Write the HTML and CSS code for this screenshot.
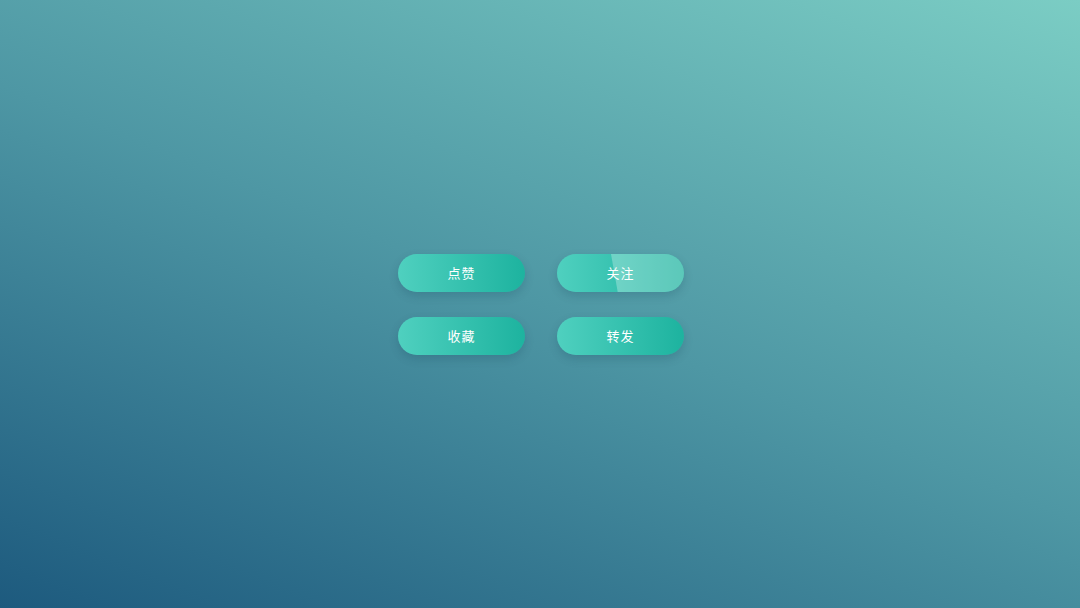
FILE: index.html
```html
<!DOCTYPE html>
<html lang="zh">
<head>
<meta charset="utf-8">
<link rel="stylesheet" href="styles.css">
</head>
<body>
<div class="stage">
  <div class="grid">
    <button class="btn">点赞</button>
    <button class="btn active"><span class="label">关注</span></button>
    <button class="btn">收藏</button>
    <button class="btn">转发</button>
  </div>
</div>
</body>
</html>
```
FILE: styles.css
```css
html, body {
  margin: 0;
  padding: 0;
  width: 1080px;
  height: 608px;
  overflow: hidden;
}
body {
  background: linear-gradient(22deg, #1d5a7e 0%, #4e97a4 50%, #7bcdc4 100%);
  font-family: "Noto Sans CJK SC", "Noto Sans", sans-serif;
}
.stage {
  height: 608px;
  display: flex;
  align-items: center;
  justify-content: center;
}
.grid {
  display: grid;
  grid-template-columns: 127px 127px;
  column-gap: 32px;
  row-gap: 25px;
  margin-left: 1px;
  margin-top: 1px;
}
.btn {
  position: relative;
  overflow: hidden;
  height: 38px;
  border: none;
  border-radius: 19px;
  background: linear-gradient(to right, #4fd0bf, #1db39f);
  color: #fff;
  font-family: "Noto Sans CJK SC", sans-serif;
  font-size: 13px;
  font-weight: 400;
  letter-spacing: 1px;
  padding: 0 0 2px 1px;
  box-shadow: 0 4px 10px rgba(10, 50, 70, 0.18);
}
.btn.active::after {
  content: "";
  position: absolute;
  top: 0;
  bottom: 0;
  left: 54px;
  right: -20px;
  background: rgba(255, 255, 255, 0.28);
  transform: skewX(10deg);
  transform-origin: top left;
}
.label {
  position: relative;
  z-index: 1;
}
```
